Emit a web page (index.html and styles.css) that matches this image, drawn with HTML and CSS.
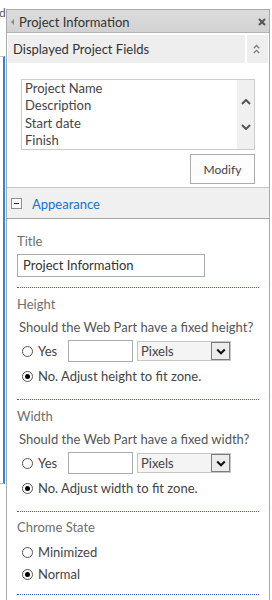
FILE: index.html
```html
<!DOCTYPE html>
<html>
<head>
<meta charset="utf-8">
<link rel="stylesheet" href="styles.css">
</head>
<body>
<div class="bg-d">d</div>
<div class="bg-box"></div>
<div class="pane">
  <div class="titlebar">
    <span class="tri"></span>
    <span class="ttl">Project Information</span>
    <svg class="close" width="8" height="8" viewBox="0 0 8 8"><path d="M1 1L7 7M7 1L1 7" stroke="#555" stroke-width="2" fill="none"/></svg>
  </div>
  <div class="fields-head">
    <div class="fh-text">Displayed Project Fields</div>
    <div class="fh-toggle"><svg width="7" height="10" viewBox="0 0 7 10"><path d="M0.8 4.2L3.5 1.5L6.2 4.2M0.8 9L3.5 6.3L6.2 9" stroke="#7a7a7a" stroke-width="1.3" fill="none"/></svg></div>
  </div>
  <div class="fields-body">
    <div class="listbox">
      <div class="items">
        <div>Project Name</div>
        <div>Description</div>
        <div>Start date</div>
        <div>Finish</div>
      </div>
      <div class="scroll">
        <svg width="10" height="6" viewBox="0 0 10 6"><path d="M1 5L5 1L9 5" stroke="#555" stroke-width="2" fill="none"/></svg>
        <svg width="10" height="6" viewBox="0 0 10 6"><path d="M1 1L5 5L9 1" stroke="#555" stroke-width="2" fill="none"/></svg>
      </div>
    </div>
    <div class="btnrow"><button class="modify">Modify</button></div>
  </div>
  <div class="app-head"><span class="minus"></span><span class="app-title">Appearance</span></div>
  <div class="app-body">
    <div class="sec sec-title">
      <div class="lbl">Title</div>
      <div class="textbox">Project Information</div>
    </div>
    <div class="sec sec-dim">
      <div class="lbl">Height</div>
      <div class="q">Should the Web Part have a fixed height?</div>
      <div class="row">
        <div class="opt opt-yes"><span class="radio"></span>Yes</div>
        <div class="tinput"></div>
        <div class="select"><span class="val">Pixels</span><span class="arr"><svg width="10" height="7" viewBox="0 0 10 7"><path d="M1.2 1.5L5 5.3L8.8 1.5" stroke="#111" stroke-width="2" fill="none"/></svg></span></div>
      </div>
      <div class="opt no"><span class="radio on"></span>No. Adjust height to fit zone.</div>
    </div>
    <div class="sec sec-dim">
      <div class="lbl">Width</div>
      <div class="q">Should the Web Part have a fixed width?</div>
      <div class="row">
        <div class="opt opt-yes"><span class="radio"></span>Yes</div>
        <div class="tinput"></div>
        <div class="select"><span class="val">Pixels</span><span class="arr"><svg width="10" height="7" viewBox="0 0 10 7"><path d="M1.2 1.5L5 5.3L8.8 1.5" stroke="#111" stroke-width="2" fill="none"/></svg></span></div>
      </div>
      <div class="opt no"><span class="radio on"></span>No. Adjust width to fit zone.</div>
    </div>
    <div class="sec sec-chrome">
      <div class="lbl">Chrome State</div>
      <div class="opt c1"><span class="radio"></span>Minimized</div>
      <div class="opt c2"><span class="radio on"></span>Normal</div>
    </div>
  </div>
</div>
</body>
</html>
```
FILE: styles.css
```css
* { box-sizing: border-box; }
html, body { margin: 0; background: #fff; }
body {
  font-family: Lato, "Open Sans", sans-serif;
  font-size: 13px;
  color: #444;
  position: relative;
  height: 600px;
  overflow: hidden;
}
.bg-d {
  position: absolute;
  left: -1px;
  top: 6px;
  font-size: 12px;
  line-height: 14px;
  color: #555;
}
.bg-box {
  position: absolute;
  left: -10px;
  top: 56px;
  width: 15px;
  height: 428px;
  border-top: 1px solid #c9c9c9;
  border-bottom: 1px solid #b9b9b9;
  border-right: 2px solid #2b88d8;
}
.pane {
  position: relative;
  margin: 9px 0 0 6px;
  width: 264px;
  height: 620px;
  border: 1px solid #a9a9a9;
  border-bottom: 0;
  background: #fff;
}
.titlebar {
  height: 23px;
  display: flex;
  align-items: center;
  background: linear-gradient(#dcdcdc, #d2d2d2);
  border-bottom: 1px solid #b2b2b2;
  padding: 1px 3px 0 4px;
}
.tri {
  width: 0;
  height: 0;
  border-top: 3px solid transparent;
  border-bottom: 3px solid transparent;
  border-right: 3px solid #888;
  margin-right: 5px;
}
.ttl { color: #333; }
.close { margin-left: auto; }
.fields-head {
  margin-top: 2px;
  height: 28px;
  display: flex;
  gap: 2px;
  padding: 0 1px;
}
.fh-text {
  flex: 1;
  background: #eeeeee;
  padding-left: 5px;
  line-height: 28px;
  color: #333;
}
.fh-toggle {
  width: 21px;
  background: #eeeeee;
  display: flex;
  align-items: center;
  justify-content: center;
  padding-right: 2px;
  padding-bottom: 1px;
}
.fields-body { padding: 16px 14px 3px; }
.listbox {
  height: 71px;
  border: 1px solid #cbcbcb;
  display: flex;
}
.items {
  flex: 1;
  padding-left: 3px;
  line-height: 17.25px;
  color: #444;
}
.scroll {
  width: 17px;
  background: #f0f0f0;
  display: flex;
  flex-direction: column;
  align-items: center;
  padding-top: 19px;
  gap: 19px;
}
.scroll svg { display: block; }
.btnrow {
  display: flex;
  justify-content: flex-end;
  margin-top: 4px;
}
.modify {
  width: 65px;
  height: 30px;
  border: 1px solid #ababab;
  background: #fdfdfd;
  font-family: Lato, "Open Sans", sans-serif;
  font-size: 12px;
  color: #444;
  padding: 0;
}
.app-head {
  height: 32px;
  border-top: 1px solid #c6c6c6;
  border-bottom: 1px solid #a5a5a5;
  background: #f0f0f0;
  display: flex;
  align-items: center;
  padding: 1px 0 0 4px;
}
.minus {
  position: relative;
  width: 11px;
  height: 11px;
  border: 1px solid #8f8f8f;
  background: #fff;
  margin-right: 10px;
}
.minus::after {
  content: "";
  position: absolute;
  left: 2px;
  top: 4px;
  width: 5px;
  height: 1px;
  background: #222;
}
.app-title { color: #1473cc; }
.app-body { padding: 0 10px; }
.sec { border-bottom: 1px dotted #3d64c8; }
.sec-title { padding: 14px 0 10px; }
.lbl { line-height: 17px; color: #6e6e6e; }
.textbox {
  margin-top: 4px;
  width: 188px;
  height: 23px;
  border: 1px solid #ababab;
  padding-left: 5px;
  line-height: 21px;
  color: #333;
}
.sec-dim { padding: 8px 0 14px; }
.q {
  margin-top: 6px;
  padding-left: 2px;
  line-height: 17px;
  color: #555;
}
.row {
  margin-top: 4px;
  height: 22px;
  display: flex;
  align-items: center;
}
.opt {
  display: flex;
  align-items: center;
  padding-left: 5px;
  line-height: 17px;
  color: #444;
}
.opt-yes { width: 51px; padding-top: 1px; }
.radio {
  position: relative;
  width: 11px;
  height: 11px;
  border: 1px solid #555;
  border-radius: 50%;
  background: #fff;
  margin-right: 5px;
  flex: none;
}
.radio.on::after {
  content: "";
  position: absolute;
  left: 2px;
  top: 2px;
  width: 5px;
  height: 5px;
  border-radius: 50%;
  background: #000;
}
.tinput {
  width: 65px;
  height: 22px;
  border: 1px solid #ababab;
  background: #fff;
}
.select {
  margin-left: 4px;
  width: 94px;
  height: 20px;
  border: 1px solid #c6c6c6;
  background: #f4f4f4;
  display: flex;
  align-items: center;
}
.val { flex: 1; padding-left: 3px; color: #444; }
.arr {
  width: 19px;
  height: 18px;
  border: 1px solid #7c7c7c;
  background: #ececec;
  display: flex;
  align-items: center;
  justify-content: center;
}
.arr svg { display: block; }
.no { margin-top: 6px; }
.sec-chrome { padding: 7px 0 11px; }
.c1 { margin-top: 8px; }
.c2 { margin-top: 5px; }
```
